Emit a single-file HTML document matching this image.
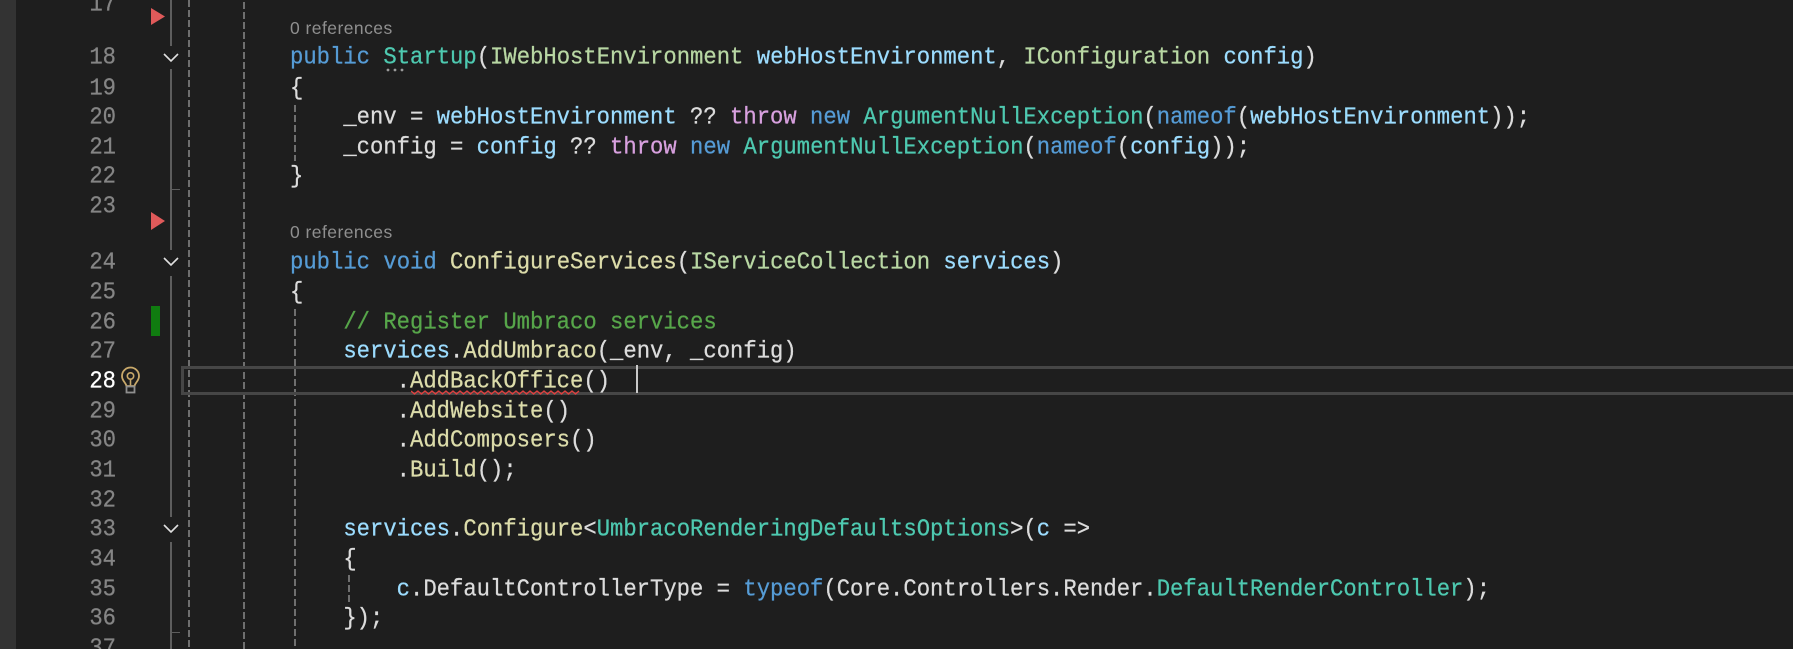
<!DOCTYPE html>
<html><head><meta charset="utf-8">
<style>
html,body{margin:0;padding:0;background:#1e1e1e;}
#r{position:relative;width:1793px;height:649px;overflow:hidden;background:#1e1e1e;font-family:"Liberation Mono",monospace;font-size:22.22px;color:#dcdcdc;}
.l,.n,.c{position:absolute;white-space:pre;line-height:30px;height:30px;}
.l,.n{transform:translateY(2px) scaleY(1.07);-webkit-text-stroke:.25px currentColor;}
.n{left:60px;width:56px;text-align:right;color:#858585;}
.c{font-family:"Liberation Sans",sans-serif;font-size:17.5px;letter-spacing:.45px;color:#8f8f8f;left:290px;}
.a{position:absolute;}
.d{position:absolute;width:2px;background:repeating-linear-gradient(to bottom,#6f6f6f 0,#6f6f6f 7px,transparent 7px,transparent 10px);}
.k{color:#569cd6}.t{color:#4ec9b0}.i{color:#b8d7a3}.p{color:#9cdcfe}.m{color:#dcdcaa}.f{color:#d8a0df}.g{color:#57a64a}
</style></head><body><div id="r">
<div class="a" style="left:0;top:0;width:16px;height:649px;background:#333"></div>

<div class="a" style="left:170px;top:0;width:2px;height:46px;background:#5e5e5e"></div>
<div class="a" style="left:170px;top:69px;width:2px;height:181px;background:#5e5e5e"></div>
<div class="a" style="left:170px;top:189px;width:10px;height:1px;background:#5e5e5e"></div>
<div class="a" style="left:170px;top:276px;width:2px;height:241px;background:#5e5e5e"></div>
<div class="a" style="left:170px;top:542px;width:2px;height:107px;background:#5e5e5e"></div>
<div class="a" style="left:170px;top:632px;width:10px;height:1px;background:#5e5e5e"></div>
<div class="d" style="left:188px;top:0;height:649px"></div>
<div class="d" style="left:243px;top:2px;height:647px"></div>
<div class="d" style="left:294px;top:105px;height:56px"></div>
<div class="d" style="left:294px;top:309px;height:340px"></div>
<div class="d" style="left:348px;top:575px;height:30px"></div>

<svg class="a" style="left:0;top:0" width="300" height="649">
<polygon points="151,8 165,16.5 151,25" fill="#e05a5a"/>
<polygon points="151,212 165,221 151,230" fill="#e05a5a"/>
<path d="M164 54 L171 61 L178 54" fill="none" stroke="#e0e0e0" stroke-width="1.6"/>
<path d="M164 258 L171 265 L178 258" fill="none" stroke="#e0e0e0" stroke-width="1.6"/>
<path d="M164 525 L171 532 L178 525" fill="none" stroke="#e0e0e0" stroke-width="1.6"/>
<rect x="151" y="306" width="9" height="30" fill="#107c10"/>
<path d="M126.5 386 C125.5 382 122 381 122 376 A8.5 8.5 0 0 1 139 376 C139 381 135.5 382 134.5 386 Z" fill="none" stroke="#c9a96a" stroke-width="1.8"/>
<circle cx="130.5" cy="376" r="3.2" fill="none" stroke="#c9a96a" stroke-width="1.6"/>
<path d="M130.5 379 V386" stroke="#c9a96a" stroke-width="1.6"/>
<rect x="126.5" y="386.5" width="8" height="6" fill="#1e1e1e" stroke="#8f8f8f" stroke-width="1.8"/>
</svg>

<div class="a" style="left:181px;top:366px;width:1620px;height:23px;border:3px solid #464646;"></div>
<div class="a" style="left:636px;top:365px;width:2px;height:28px;background:#c8c8c8"></div>

<div class="n" style="top:-12px">17</div>
<div class="n" style="top:41px">18</div>
<div class="n" style="top:72px">19</div>
<div class="n" style="top:101px">20</div>
<div class="n" style="top:131px">21</div>
<div class="n" style="top:160px">22</div>
<div class="n" style="top:190px">23</div>
<div class="n" style="top:246px">24</div>
<div class="n" style="top:276px">25</div>
<div class="n" style="top:306px">26</div>
<div class="n" style="top:335px">27</div>
<div class="n" style="top:365px;color:#fff">28</div>
<div class="n" style="top:395px">29</div>
<div class="n" style="top:424px">30</div>
<div class="n" style="top:454px">31</div>
<div class="n" style="top:484px">32</div>
<div class="n" style="top:513px">33</div>
<div class="n" style="top:543px">34</div>
<div class="n" style="top:573px">35</div>
<div class="n" style="top:602px">36</div>
<div class="n" style="top:632px">37</div>

<div class="c" style="top:13px">0 references</div>
<div class="c" style="top:217px">0 references</div>

<div class="l" style="left:290px;top:41px"><span class="k">public</span> <span class="t">Startup</span>(<span class="i">IWebHostEnvironment</span> <span class="p">webHostEnvironment</span>, <span class="i">IConfiguration</span> <span class="p">config</span>)</div>
<div class="l" style="left:290px;top:72px">{</div>
<div class="l" style="left:290px;top:101px">    _env = <span class="p">webHostEnvironment</span> ?? <span class="f">throw</span> <span class="k">new</span> <span class="t">ArgumentNullException</span>(<span class="k">nameof</span>(<span class="p">webHostEnvironment</span>));</div>
<div class="l" style="left:290px;top:131px">    _config = <span class="p">config</span> ?? <span class="f">throw</span> <span class="k">new</span> <span class="t">ArgumentNullException</span>(<span class="k">nameof</span>(<span class="p">config</span>));</div>
<div class="l" style="left:290px;top:160px">}</div>
<div class="l" style="left:290px;top:246px"><span class="k">public</span> <span class="k">void</span> <span class="m">ConfigureServices</span>(<span class="i">IServiceCollection</span> <span class="p">services</span>)</div>
<div class="l" style="left:290px;top:276px">{</div>
<div class="l g" style="left:290px;top:306px">    // Register Umbraco services</div>
<div class="l" style="left:290px;top:335px">    <span class="p">services</span>.<span class="m">AddUmbraco</span>(_env, _config)</div>
<div class="l" style="left:290px;top:365px">        .<span class="m">AddBackOffice</span>()</div>
<div class="l" style="left:290px;top:395px">        .<span class="m">AddWebsite</span>()</div>
<div class="l" style="left:290px;top:424px">        .<span class="m">AddComposers</span>()</div>
<div class="l" style="left:290px;top:454px">        .<span class="m">Build</span>();</div>
<div class="l" style="left:290px;top:513px">    <span class="p">services</span>.<span class="m">Configure</span>&lt;<span class="t">UmbracoRenderingDefaultsOptions</span>&gt;(<span class="p">c</span> =&gt;</div>
<div class="l" style="left:290px;top:543px">    {</div>
<div class="l" style="left:290px;top:573px">        <span class="p">c</span>.DefaultControllerType = <span class="k">typeof</span>(Core.Controllers.Render.<span class="t">DefaultRenderController</span>);</div>
<div class="l" style="left:290px;top:602px">    });</div>

<svg class="a" style="left:411px;top:389px" width="172" height="7"><path d="M0 2 l3.5 3 l3.5 -3 l3.5 3 l3.5 -3 l3.5 3 l3.5 -3 l3.5 3 l3.5 -3 l3.5 3 l3.5 -3 l3.5 3 l3.5 -3 l3.5 3 l3.5 -3 l3.5 3 l3.5 -3 l3.5 3 l3.5 -3 l3.5 3 l3.5 -3 l3.5 3 l3.5 -3 l3.5 3 l3.5 -3 l3.5 3 l3.5 -3 l3.5 3 l3.5 -3 l3.5 3 l3.5 -3 l3.5 3 l3.5 -3 l3.5 3 l3.5 -3 l3.5 3 l3.5 -3 l3.5 3 l3.5 -3 l3.5 3 l3.5 -3 l3.5 3 l3.5 -3 l3.5 3 l3.5 -3 l3.5 3 l3.5 -3 l3.5 3 l3.5 -3" fill="none" stroke="#e0403f" stroke-width="1.4"/></svg>
<svg class="a" style="left:385px;top:67px" width="24" height="6"><circle cx="3" cy="3" r="1.4" fill="#9a9a9a"/><circle cx="10" cy="3" r="1.4" fill="#9a9a9a"/><circle cx="17" cy="3" r="1.4" fill="#9a9a9a"/></svg>
</div></body></html>
